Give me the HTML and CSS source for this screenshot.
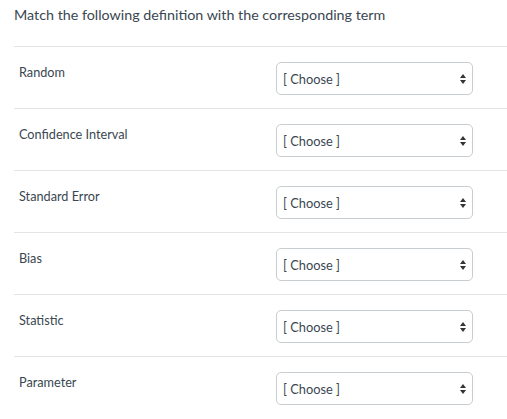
FILE: index.html
```html
<!DOCTYPE html>
<html>
<head>
<meta charset="utf-8">
<link rel="stylesheet" href="styles.css">
</head>
<body>
<div class="question">Match the following definition with the corresponding term</div>
<div class="rows">
  <div class="row"><div class="label">Random</div><div class="select"><span>[ Choose ]</span><svg class="arrows" width="6" height="10" viewBox="0 0 6 10"><path d="M3 0 L6 4 L0 4 Z M0 6 L6 6 L3 10 Z" fill="#333"/></svg></div></div>
  <div class="row"><div class="label">Confidence Interval</div><div class="select"><span>[ Choose ]</span><svg class="arrows" width="6" height="10" viewBox="0 0 6 10"><path d="M3 0 L6 4 L0 4 Z M0 6 L6 6 L3 10 Z" fill="#333"/></svg></div></div>
  <div class="row"><div class="label">Standard Error</div><div class="select"><span>[ Choose ]</span><svg class="arrows" width="6" height="10" viewBox="0 0 6 10"><path d="M3 0 L6 4 L0 4 Z M0 6 L6 6 L3 10 Z" fill="#333"/></svg></div></div>
  <div class="row"><div class="label">Bias</div><div class="select"><span>[ Choose ]</span><svg class="arrows" width="6" height="10" viewBox="0 0 6 10"><path d="M3 0 L6 4 L0 4 Z M0 6 L6 6 L3 10 Z" fill="#333"/></svg></div></div>
  <div class="row"><div class="label">Statistic</div><div class="select"><span>[ Choose ]</span><svg class="arrows" width="6" height="10" viewBox="0 0 6 10"><path d="M3 0 L6 4 L0 4 Z M0 6 L6 6 L3 10 Z" fill="#333"/></svg></div></div>
  <div class="row"><div class="label">Parameter</div><div class="select"><span>[ Choose ]</span><svg class="arrows" width="6" height="10" viewBox="0 0 6 10"><path d="M3 0 L6 4 L0 4 Z M0 6 L6 6 L3 10 Z" fill="#333"/></svg></div></div>
</div>
</body>
</html>
```
FILE: styles.css
```css
html, body {
  margin: 0;
  padding: 0;
  background: #fff;
}
body {
  font-family: Lato, "Noto Sans", sans-serif;
  color: #3a4751;
  width: 507px;
  overflow: hidden;
}
.question {
  font-size: 14.3px;
  line-height: 18px;
  padding: 6px 0 0 14px;
  height: 46px;
  box-sizing: border-box;
}
.rows {
  margin-left: 14px;
}
.row {
  border-top: 1px solid #e2e4e6;
  height: 61px;
  display: grid;
  grid-template-columns: 262px 197px;
  align-items: start;
}
.label {
  font-size: 12.7px;
  line-height: 16px;
  padding: 17px 0 0 5px;
}
.select {
  margin-top: 15px;
  height: 33px;
  box-sizing: border-box;
  border: 1px solid #c7cdd1;
  border-radius: 5px;
  display: flex;
  align-items: center;
  justify-content: space-between;
  padding: 0 6px 0 6px;
  font-size: 12.8px;
}
.arrows {
  display: block;
}
```
